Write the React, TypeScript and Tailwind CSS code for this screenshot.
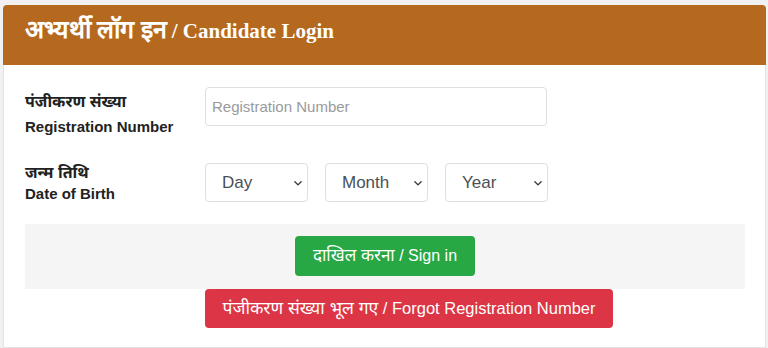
import React from "react";

const Chevron = () => (
  <svg
    className="pointer-events-none absolute right-[5px] top-1/2 -translate-y-1/2"
    width="10"
    height="10"
    viewBox="0 0 16 16"
  >
    <path d="M3 6l5 5 5-5" fill="none" stroke="#343a40" strokeWidth="2.2" strokeLinecap="round" strokeLinejoin="round" />
  </svg>
);

function Sel({ label }: { label: string }) {
  return (
    <div className="relative w-[103px] h-[39px]">
      <select className="appearance-none w-full h-full rounded-[4px] border border-[#dcdfe3] bg-white pl-[16px] text-[17px] text-[#495057] outline-none">
        <option>{label}</option>
      </select>
      <Chevron />
    </div>
  );
}

export default function App() {
  return (
    <div
      className="min-h-[348px] w-[768px] bg-[#f1f1f1] pt-[5px] pl-[3px] pr-[2px]"
      style={{ fontFamily: '"Liberation Sans", Arial, "Noto Sans", sans-serif' }}
    >
      <div className="rounded-t-[5px] border border-[#e2e2e2] bg-white h-[343px]">
        <div className="flex h-[60px] items-center rounded-t-[4px] bg-[#b4691f] px-[22px] pb-[10px] -mx-px -mt-px">
          <h1
            className="text-[21px] font-bold text-white"
            style={{ fontFamily: '"Liberation Serif", "Times New Roman", serif' }}
          >
            <span className="text-[25px]">अभ्यर्थी लॉग इन</span> / Candidate Login
          </h1>
        </div>
        <div className="px-[21px] pt-[22px]">
          <div className="flex h-[39px] items-start">
            <div className="w-[180px] pt-[4px] text-[15px] font-bold leading-[22px] text-[#222]">
              <div className="text-[16px]">पंजीकरण संख्या</div>
              <div className="mt-[3px]">Registration Number</div>
            </div>
            <input
              className="h-[39px] w-[342px] rounded-[4px] border border-[#dcdfe3] px-[6px] text-[15px] text-[#495057] outline-none placeholder:text-[#9a9a9a]"
              placeholder="Registration Number"
            />
          </div>
          <div className="mt-[37px] flex h-[39px] items-start">
            <div className="-mt-[1px] w-[180px] text-[15px] font-bold leading-[22px] text-[#222]">
              <div className="text-[16px]">जन्म तिथि</div>
              <div className="-mt-[1px]">Date of Birth</div>
            </div>
            <div className="flex gap-[17px]">
              <Sel label="Day" />
              <Sel label="Month" />
              <Sel label="Year" />
            </div>
          </div>
          <div className="mt-[22px] flex w-[720px] justify-center bg-[#f5f5f5] pt-[12px] pb-[13px]">
            <button className="h-[40px] w-[180px] rounded-[4px] bg-[#28a745] text-[16px] text-white">
              <span className="text-[17px]">दाखिल करना</span> / Sign in
            </button>
          </div>
          <div className="pl-[180px]">
            <button className="h-[39px] w-[408px] rounded-[4px] bg-[#dc3545] text-[16.5px] text-white">
              <span className="text-[17.5px]">पंजीकरण संख्या भूल गए</span> / Forgot Registration Number
            </button>
          </div>
        </div>
      </div>
    </div>
  );
}
